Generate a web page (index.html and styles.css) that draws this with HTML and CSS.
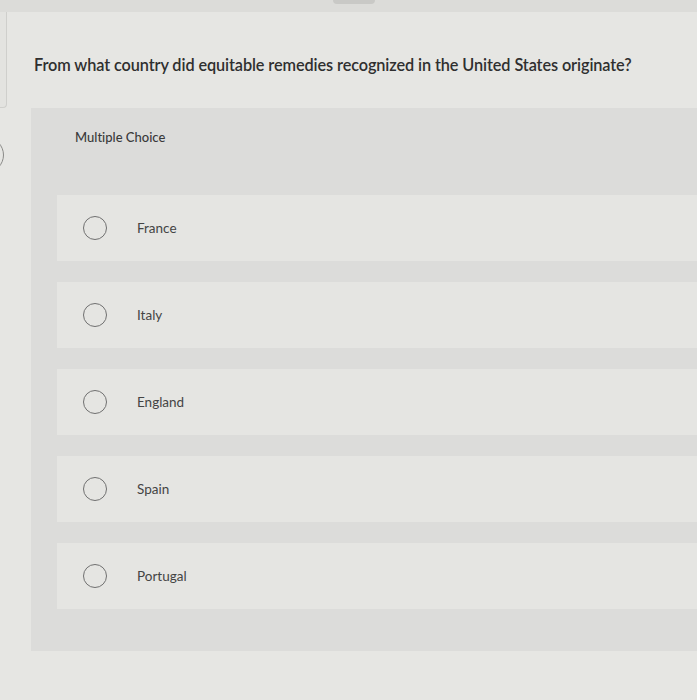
FILE: index.html
```html
<!DOCTYPE html>
<html>
<head>
<meta charset="utf-8">
<link rel="stylesheet" href="styles.css">
</head>
<body>
<div class="top-strip"><span class="tab"></span></div>
<div class="question-row">
  <div class="side-stub"></div>
  <p class="question">From what country did equitable remedies recognized in the United States originate?</p>
</div>
<div class="side-button"></div>
<section class="panel">
  <h2 class="panel-title">Multiple Choice</h2>
  <ul class="options">
    <li class="option"><span class="radio"></span><span class="label">France</span></li>
    <li class="option"><span class="radio"></span><span class="label">Italy</span></li>
    <li class="option"><span class="radio"></span><span class="label">England</span></li>
    <li class="option"><span class="radio"></span><span class="label">Spain</span></li>
    <li class="option"><span class="radio"></span><span class="label">Portugal</span></li>
  </ul>
</section>
</body>
</html>
```
FILE: styles.css
```css
html, body {
  margin: 0;
  padding: 0;
}
body {
  background: #e6e6e3;
  font-family: Lato, "Open Sans", "Liberation Sans", sans-serif;
  font-variant-ligatures: none;
  color: #333;
  width: 697px;
  height: 700px;
  overflow: hidden;
  position: relative;
}
.top-strip {
  height: 12px;
  background: #dcdcd9;
  position: relative;
}
.tab {
  position: absolute;
  left: 333px;
  top: 0;
  width: 42px;
  height: 4px;
  border-radius: 0 0 4px 4px;
  background: #c9c9c6;
}
.question-row {
  display: flex;
  height: 96px;
}
.side-stub {
  width: 7px;
  flex: none;
  border-right: 1px solid #cfcfcc;
  border-bottom: 1px solid #cfcfcc;
  border-bottom-right-radius: 4px;
  background: #e3e3e0;
  box-sizing: border-box;
}
.question {
  margin: 0;
  padding: 43px 0 0 27px;
  font-size: 16.3px;
  font-weight: 600;
  color: #2f2f2f;
  letter-spacing: -0.1px;
  white-space: nowrap;
}
.side-button {
  position: absolute;
  left: -32px;
  top: 137px;
  width: 34px;
  height: 34px;
  border: 1.5px solid #8a8a88;
  border-radius: 50%;
}
.panel {
  margin-left: 31px;
  background: #dcdcda;
  padding: 20px 0 42px 26px;
}
.panel-title {
  margin: 0 0 49px 18px;
  font-size: 13px;
  font-weight: 500;
  color: #3a3a3a;
  line-height: 18px;
}
.options {
  list-style: none;
  margin: 0;
  padding: 0;
  display: flex;
  flex-direction: column;
  gap: 21px;
}
.option {
  display: flex;
  align-items: center;
  height: 66px;
  background: #e5e5e2;
  padding-left: 26px;
}
.radio {
  width: 22px;
  height: 22px;
  border: 1.5px solid #707070;
  border-radius: 50%;
  flex: none;
}
.label {
  margin-left: 30px;
  font-size: 13.5px;
  color: #444;
}
```
